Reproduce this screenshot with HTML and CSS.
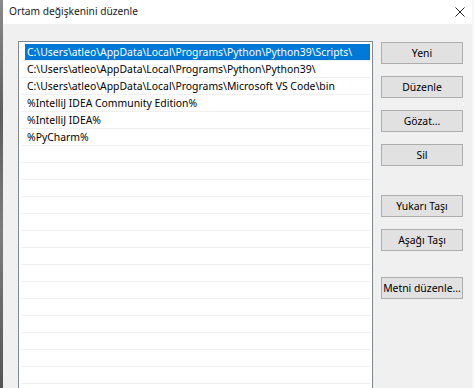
FILE: index.html
```html
<!DOCTYPE html>
<html lang="tr">
<head>
    <meta charset="UTF-8">
    <meta name="viewport" content="width=device-width, initial-scale=1.0">
    <title>Ortam değişkenini düzenle</title>
    <link rel="stylesheet" href="styles.css">
</head>
<body>
    <div class="screen">
        <div class="edge"></div>
        <div class="window">
            <div class="titlebar">
                <span class="title">Ortam değişkenini düzenle</span>
                <svg class="close" width="10" height="10" viewBox="0 0 10 10">
                    <path d="M0.5 0.5 L9.5 9.5 M9.5 0.5 L0.5 9.5" stroke="#222" stroke-width="1" fill="none"/>
                </svg>
            </div>
            <div class="content">
                <div class="list">
                    <div class="row selected"><span>C:\Users\atleo\AppData\Local\Programs\Python\Python39\Scripts\</span></div>
                    <div class="row"><span>C:\Users\atleo\AppData\Local\Programs\Python\Python39\</span></div>
                    <div class="row"><span>C:\Users\atleo\AppData\Local\Programs\Microsoft VS Code\bin</span></div>
                    <div class="row"><span>%IntelliJ IDEA Community Edition%</span></div>
                    <div class="row"><span>%IntelliJ IDEA%</span></div>
                    <div class="row"><span>%PyCharm%</span></div>
                    <div class="row"></div>
                    <div class="row"></div>
                    <div class="row"></div>
                    <div class="row"></div>
                    <div class="row"></div>
                    <div class="row"></div>
                    <div class="row"></div>
                    <div class="row"></div>
                    <div class="row"></div>
                    <div class="row"></div>
                    <div class="row"></div>
                    <div class="row"></div>
                    <div class="row"></div>
                    <div class="row"></div>
                    <div class="row"></div>
                </div>
                <div class="buttons">
                    <button>Yeni</button>
                    <button>Düzenle</button>
                    <button>Gözat...</button>
                    <button>Sil</button>
                    <button class="group-start">Yukarı Taşı</button>
                    <button>Aşağı Taşı</button>
                    <button class="last">Metni düzenle...</button>
                </div>
            </div>
        </div>
        <div class="edge-right"></div>
    </div>
</body>
</html>
```

FILE: styles.css
```css
body {
    margin: 0;
    font-family: "Noto Sans", "Open Sans", sans-serif;
    font-size: 10.4px;
    color: #000;
    background-color: #f0f0f0;
    overflow: hidden;
}
.screen {
    display: flex;
    height: 388px;
    overflow: hidden;
}
.edge {
    width: 3px;
    background: linear-gradient(#8a8a8a, #5e5e5e 30%, #7d7d7d 60%, #555 100%);
}
.edge-right {
    width: 2px;
    background-color: #f7f7f7;
}
.window {
    flex: 1;
    display: flex;
    flex-direction: column;
    background-color: #f0f0f0;
}
.titlebar {
    flex-shrink: 0;
    height: 24px;
    background-color: #fff;
    display: flex;
    align-items: center;
    justify-content: space-between;
    padding: 0 7px 2px 6px;
    box-sizing: border-box;
}
.title {
    font-size: 10.2px;
    color: #1a1a1a;
}
.close {
    margin-top: 2px;
}
.content {
    display: flex;
    align-items: flex-start;
    padding: 17px 0 0 15px;
    gap: 8px;
}
.list {
    flex-shrink: 0;
    width: 355px;
    height: 380px;
    border: 1px solid #828790;
    background-color: #fff;
    padding: 2px 2px 0 2px;
    box-sizing: border-box;
    overflow: hidden;
}
.row {
    height: 17px;
    border-bottom: 1px solid #f0f0f0;
    box-sizing: border-box;
    display: flex;
}
.row span {
    flex: 1;
    margin-left: 4px;
    padding-left: 2px;
    line-height: 16px;
    white-space: nowrap;
}
.row.selected span {
    background-color: #0078d7;
    color: #fff;
}
.buttons {
    display: flex;
    flex-direction: column;
    gap: 12px;
    margin-top: 1px;
}
.buttons button {
    width: 82px;
    height: 22px;
    padding: 0;
    font-family: "Noto Sans", "Open Sans", sans-serif;
    font-size: 10.4px;
    color: #000;
    background-color: #e1e1e1;
    border: 1px solid #adadad;
    border-radius: 0;
    white-space: nowrap;
}
.buttons .group-start {
    margin-top: 17px;
}
.buttons .last {
    margin-top: 14px;
}
```
